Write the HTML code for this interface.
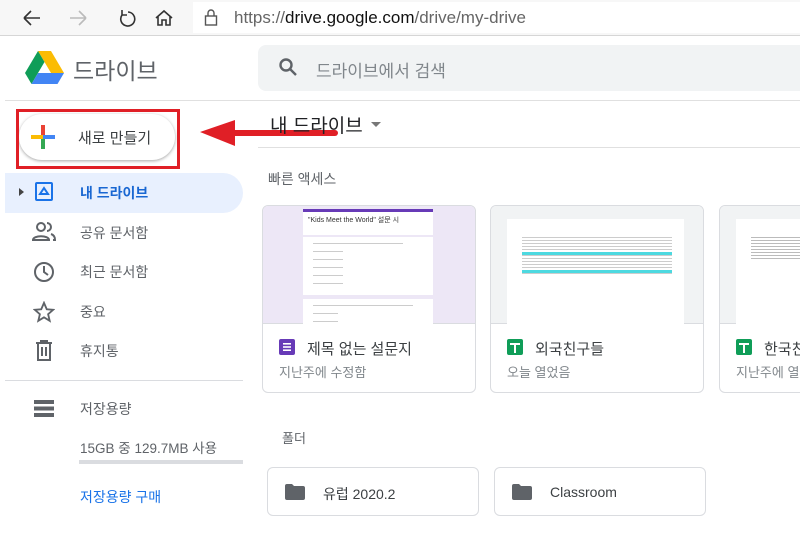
<!DOCTYPE html>
<html><head><meta charset="utf-8"><style>
*{margin:0;padding:0;box-sizing:border-box}
body{width:800px;height:533px;overflow:hidden;background:#fff;font-family:"Liberation Sans","Noto Sans CJK KR",sans-serif;position:relative;color:#3c4043}
.a{position:absolute}
.t{position:absolute;white-space:nowrap}
.card{position:absolute;top:205px;height:188px;border:1px solid #dadce0;border-radius:6px;overflow:hidden;background:#fff}
.card .th{position:absolute;left:0;right:0;top:0;height:118px;background:#f1f3f4;border-bottom:1px solid #dadce0}
.fold{position:absolute;top:467px;height:49px;border:1px solid #dadce0;border-radius:6px;width:212px}
.ln{position:absolute;left:10px;height:1px;background:#ccc}
</style></head><body>
<div class="a" style="left:0;top:0;width:800px;height:36px;background:#f7f7f7;border-bottom:1px solid #d6d6d6"></div>
<svg class="a" style="left:22px;top:8px" width="160" height="20" viewBox="0 0 160 20" fill="none" stroke="#333" stroke-width="1.6">
<path d="M2 10h16M2 10l7-7M2 10l7 7"/>
<path d="M48 10h16M64 10l-7-7M64 10l-7 7" stroke="#bbb"/>
<path d="M106 4a7 7 0 1 1-6 3M100 2v5h5" />
<path d="M134 10l8-7 8 7M136 8v9h4v-5h4v5h4v-9"/>
</svg>
<div class="a" style="left:193px;top:2px;width:610px;height:31px;background:#fff"></div>
<svg class="a" style="left:204px;top:8px" width="14" height="18" viewBox="0 0 14 18" fill="none" stroke="#555" stroke-width="1.4"><rect x="1.5" y="8" width="11" height="9"/><path d="M4 8V5a3 3 0 0 1 6 0v3"/></svg>
<div class="t" style="left:234px;top:8px;font-size:17px;color:#666">https://<span style="color:#111">drive.google.com</span>/drive/my-drive</div>
<svg class="a" style="left:25px;top:51px" width="39" height="34" viewBox="0 0 39 34"><path d="M13 0h13l13 22H26z" fill="#fbbc04"/><path d="M13 0L0 22l6.5 11L19.5 11z" fill="#0f9d58"/><path d="M6.5 33h26L39 22H13z" fill="#4285f4"/></svg>
<div class="t" style="left:73px;top:52px;font-size:23px;color:#5f6368">드라이브</div>
<div class="a" style="left:258px;top:45px;width:542px;height:46px;background:#f1f3f4;border-radius:8px 0 0 8px"></div>
<svg class="a" style="left:278px;top:57px" width="20" height="20" viewBox="0 0 20 20" fill="none" stroke="#5f6368" stroke-width="2.4"><circle cx="8" cy="8" r="5.5"/><path d="M12 12l6 6"/></svg>
<div class="t" style="left:316px;top:57px;font-size:17px;color:#80868b">드라이브에서 검색</div>
<div class="a" style="left:5px;top:100px;width:795px;height:1px;background:#e0e0e0"></div>
<div class="a" style="left:19px;top:114px;width:156px;height:46px;border-radius:23px;background:#fff;box-shadow:0 1px 3px rgba(0,0,0,.35)"></div>
<div class="a" style="left:16px;top:109px;width:164px;height:60px;border:3px solid #e01f26"></div>
<svg class="a" style="left:31px;top:125px" width="24" height="24" viewBox="0 0 24 24"><rect x="10" y="0" width="4" height="12" fill="#ea4335"/><rect x="10" y="12" width="4" height="12" fill="#34a853"/><rect x="0" y="10" width="12" height="4" fill="#fbbc04"/><rect x="12" y="10" width="12" height="4" fill="#4285f4"/></svg>
<div class="t" style="left:78px;top:127px;font-size:15px;color:#3c4043">새로 만들기</div>
<svg class="a" style="left:198px;top:118px" width="142" height="30" viewBox="0 0 142 30"><path d="M36 15H137" stroke="#e01f26" stroke-width="6" stroke-linecap="round"/><path d="M2 14L37 2v26z" fill="#e01f26"/></svg>
<div class="a" style="left:5px;top:173px;width:238px;height:40px;background:#e8f0fe;border-radius:0 20px 20px 0"></div>
<div class="a" style="left:19px;top:188px;width:0;height:0;border-left:5px solid #444;border-top:4px solid transparent;border-bottom:4px solid transparent"></div>
<svg class="a" style="left:34px;top:181px" width="20" height="22" viewBox="0 0 20 22" fill="none" stroke="#1a73e8" stroke-width="2"><rect x="2" y="2" width="16" height="17" rx="1"/><path d="M6 13l4-6 4 6z"/></svg>
<div class="t" style="left:80px;top:183px;font-size:14px;color:#1967d2;font-weight:bold">내 드라이브</div>
<svg class="a" style="left:32px;top:222px" width="24" height="20" viewBox="0 0 24 20"><circle cx="9" cy="5" r="4" fill="none" stroke="#5f6368" stroke-width="2"/><path d="M1 18c0-5 16-5 16 0z" fill="none" stroke="#5f6368" stroke-width="2"/><path d="M15 1a4 4 0 0 1 0 8M19 12c3 1 4 3 4 6h-2" fill="none" stroke="#5f6368" stroke-width="2"/></svg>
<div class="t" style="left:80px;top:223px;font-size:14px;color:#5f6368">공유 문서함</div>
<svg class="a" style="left:33px;top:261px" width="22" height="22" viewBox="0 0 22 22" fill="none" stroke="#5f6368" stroke-width="2"><circle cx="11" cy="11" r="9"/><path d="M11 5v6l4 3"/></svg>
<div class="t" style="left:80px;top:262px;font-size:14px;color:#5f6368">최근 문서함</div>
<svg class="a" style="left:33px;top:301px" width="22" height="22" viewBox="0 0 24 24" fill="none" stroke="#5f6368" stroke-width="2"><path d="M12 2l3 7 7 .6-5.5 4.8 1.7 7.2L12 17.8 5.8 21.6 7.5 14.4 2 9.6 9 9z"/></svg>
<div class="t" style="left:80px;top:302px;font-size:14px;color:#5f6368">중요</div>
<svg class="a" style="left:35px;top:340px" width="18" height="21" viewBox="0 0 18 21" fill="none" stroke="#5f6368" stroke-width="2"><path d="M1 3h16M6 3V1h6v2M3 3v17h12V3M7 7v9M11 7v9"/></svg>
<div class="t" style="left:80px;top:341px;font-size:14px;color:#5f6368">휴지통</div>
<div class="a" style="left:5px;top:380px;width:238px;height:1px;background:#dadce0"></div>
<svg class="a" style="left:34px;top:400px" width="20" height="17" viewBox="0 0 20 17" fill="#5f6368"><rect y="0" width="20" height="4"/><rect y="6.5" width="20" height="4"/><rect y="13" width="20" height="4"/></svg>
<div class="t" style="left:80px;top:399px;font-size:14px;color:#5f6368">저장용량</div>
<div class="t" style="left:80px;top:437px;font-size:13.5px;color:#5f6368">15GB 중 129.7MB 사용</div>
<div class="a" style="left:79px;top:460px;width:164px;height:4px;background:#dadce0"></div>
<div class="t" style="left:80px;top:487px;font-size:14px;color:#1a73e8">저장용량 구매</div>
<div class="t" style="left:270px;top:111px;font-size:19px;color:#202124">내 드라이브</div>
<div class="a" style="left:371px;top:122px;width:0;height:0;border-top:5px solid #777;border-left:5px solid transparent;border-right:5px solid transparent"></div>
<div class="a" style="left:258px;top:147px;width:542px;height:1px;background:#e0e0e0"></div>
<div class="t" style="left:268px;top:169px;font-size:14px;color:#5f6368">빠른 액세스</div>
<div class="card" style="left:262px;width:214px">
<div class="th" style="background:#ede7f6">
<div class="a" style="left:40px;top:3px;width:130px;height:26px;background:#fff;border-top:3px solid #673ab7"></div>
<div class="t" style="left:45px;top:9px;font-size:7px;color:#333">"Kids Meet the World" 설문 시</div>
<div class="a" style="left:40px;top:31px;width:130px;height:58px;background:#fff">
<div class="ln" style="top:6px;width:90px"></div><div class="ln" style="top:14px;width:30px"></div><div class="ln" style="top:22px;width:30px"></div><div class="ln" style="top:30px;width:30px"></div><div class="ln" style="top:38px;width:30px"></div><div class="ln" style="top:46px;width:30px"></div></div>
<div class="a" style="left:40px;top:93px;width:130px;height:30px;background:#fff">
<div class="ln" style="top:6px;width:100px"></div><div class="ln" style="top:14px;width:25px"></div><div class="ln" style="top:22px;width:25px"></div></div>
</div>
<svg class="a" style="left:16px;top:133px" width="16" height="16"><rect width="16" height="16" rx="2" fill="#673ab7"/><rect x="4" y="4" width="8" height="1.6" fill="#fff"/><rect x="4" y="7.2" width="8" height="1.6" fill="#fff"/><rect x="4" y="10.4" width="8" height="1.6" fill="#fff"/></svg>
<div class="t" style="left:44px;top:132px;font-size:15px;color:#3c4043">제목 없는 설문지</div>
<div class="t" style="left:16px;top:156px;font-size:13px;color:#80868b">지난주에 수정함</div>
</div>
<div class="card" style="left:490px;width:214px">
<div class="th"><div class="a" style="left:16px;top:13px;width:177px;height:105px;background:#fff">
<div class="a" style="left:15px;top:16px;width:150px;height:40px;background:repeating-linear-gradient(#fff 0 2px,#ccc 2px 3px)"></div>
<div class="a" style="left:15px;top:33px;width:150px;height:3px;background:#4dd9e0"></div>
<div class="a" style="left:15px;top:51px;width:150px;height:3px;background:#4dd9e0"></div>
</div></div>
<svg class="a" style="left:16px;top:133px" width="16" height="16"><rect width="16" height="16" rx="2" fill="#0f9d58"/><path d="M3 5h10M8 5v9" stroke="#fff" stroke-width="2"/></svg>
<div class="t" style="left:44px;top:132px;font-size:15px;color:#3c4043">외국친구들</div>
<div class="t" style="left:16px;top:156px;font-size:13px;color:#80868b">오늘 열었음</div>
</div>
<div class="card" style="left:719px;width:120px">
<div class="th"><div class="a" style="left:16px;top:13px;width:110px;height:105px;background:#fff">
<div class="a" style="left:15px;top:16px;width:80px;height:26px;background:repeating-linear-gradient(#fff 0 2px,#bbb 2px 3px)"></div></div></div>
<svg class="a" style="left:16px;top:133px" width="16" height="16"><rect width="16" height="16" rx="2" fill="#0f9d58"/><path d="M3 5h10M8 5v9" stroke="#fff" stroke-width="2"/></svg>
<div class="t" style="left:44px;top:132px;font-size:15px;color:#3c4043">한국친구들</div>
<div class="t" style="left:16px;top:156px;font-size:13px;color:#80868b">지난주에 열었음</div>
</div>
<div class="t" style="left:282px;top:428px;font-size:13px;color:#5f6368">폴더</div>
<div class="fold" style="left:267px"></div>
<div class="fold" style="left:494px"></div>
<svg class="a" style="left:285px;top:484px" width="20" height="16"><path d="M0 2a2 2 0 0 1 2-2h5l2 2h9a2 2 0 0 1 2 2v10a2 2 0 0 1-2 2H2a2 2 0 0 1-2-2z" fill="#5f6368"/></svg>
<div class="t" style="left:323px;top:484px;font-size:14px;color:#3c4043">유럽 2020.2</div>
<svg class="a" style="left:512px;top:484px" width="20" height="16"><path d="M0 2a2 2 0 0 1 2-2h5l2 2h9a2 2 0 0 1 2 2v10a2 2 0 0 1-2 2H2a2 2 0 0 1-2-2z" fill="#5f6368"/></svg>
<div class="t" style="left:550px;top:484px;font-size:14px;color:#3c4043">Classroom</div>
</body></html>
